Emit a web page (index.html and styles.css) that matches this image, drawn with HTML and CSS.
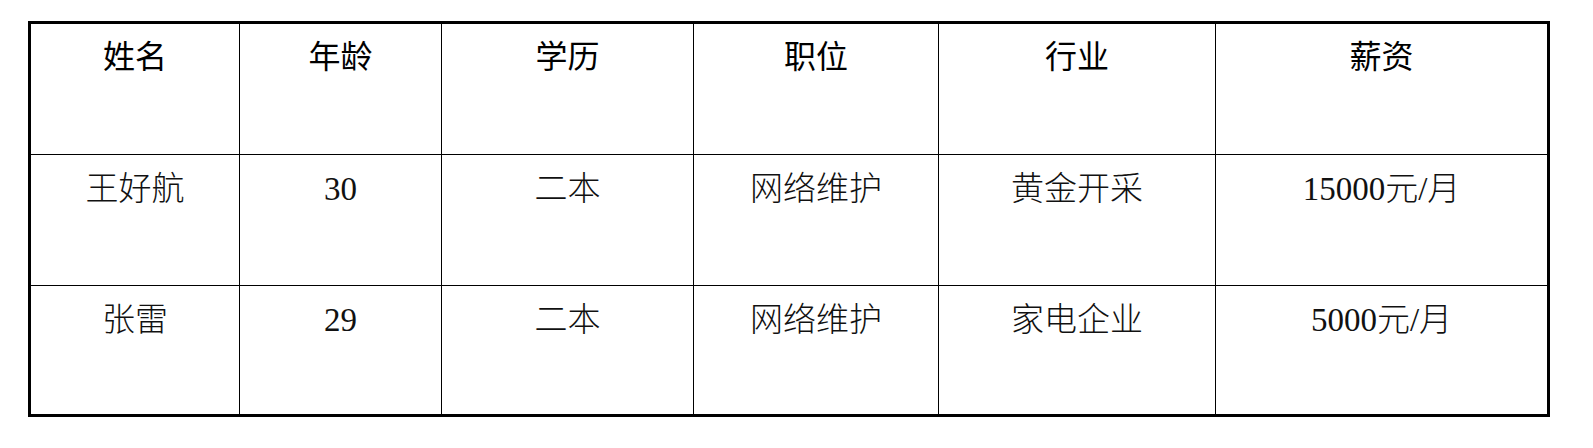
FILE: index.html
```html
<!DOCTYPE html>
<html lang="zh-CN">
<head>
<meta charset="utf-8">
<title>表格</title>
<link rel="stylesheet" href="styles.css">
</head>
<body>
<table class="info">
  <colgroup>
    <col class="c1"><col class="c2"><col class="c3"><col class="c4"><col class="c5"><col class="c6">
  </colgroup>
  <thead>
    <tr class="head">
      <th>姓名</th><th>年龄</th><th>学历</th><th>职位</th><th>行业</th><th>薪资</th>
    </tr>
  </thead>
  <tbody>
    <tr class="row">
      <td>王好航</td><td><span class="num">30</span></td><td>二本</td><td>网络维护</td><td>黄金开采</td><td><span class="num">15000</span>元<span class="num">/</span>月</td>
    </tr>
    <tr class="row last">
      <td>张雷</td><td><span class="num">29</span></td><td>二本</td><td>网络维护</td><td>家电企业</td><td><span class="num">5000</span>元<span class="num">/</span>月</td>
    </tr>
  </tbody>
</table>
</body>
</html>
```

FILE: styles.css
```css
html, body {
  margin: 0;
  padding: 0;
  background: #fff;
}

body {
  padding: 21px 0 0 28px;
}

.info {
  border: 3px solid #000;
  border-collapse: separate;
  border-spacing: 0;
  table-layout: fixed;
  width: 1522px;
}

.c1 { width: 209px; }
.c2 { width: 202px; }
.c3 { width: 252px; }
.c4 { width: 245px; }
.c5 { width: 277px; }
.c6 { width: 331px; }

.info th,
.info td {
  box-sizing: border-box;
  padding: 14px 0 0 0;
  text-align: center;
  vertical-align: top;
  border-right: 1px solid #000;
  border-bottom: 1px solid #000;
  font-size: 32px;
  line-height: 32px;
  color: #000;
}

.info th:last-child,
.info td:last-child {
  border-right: none;
}

.row.last td {
  border-bottom: none;
}

.head th {
  height: 131px;
  font-family: "Noto Sans CJK SC", sans-serif;
  font-weight: 400;
}

.row td {
  height: 131px;
  padding-top: 14px;
  font-family: "Noto Sans CJK SC", sans-serif;
  font-size: 33px;
  line-height: 34px;
  font-weight: 300;
  color: #111;
}

.row .num {
  font-family: "Liberation Serif", serif;
  font-weight: 400;
}

.row.last td {
  height: 128px;
}
```
